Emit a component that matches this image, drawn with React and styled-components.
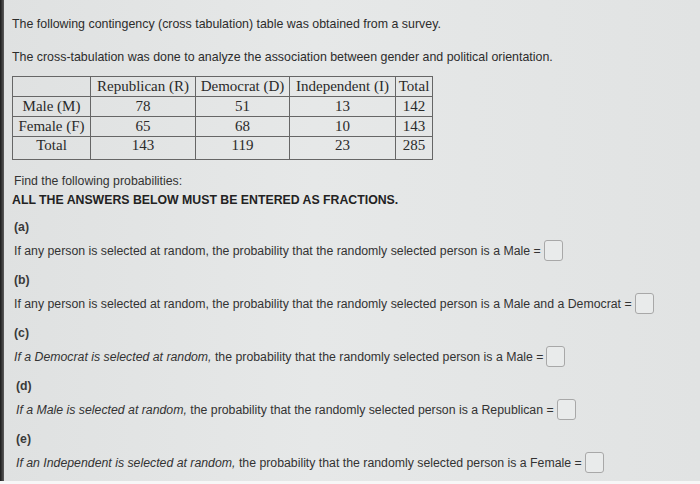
import React from 'react';
import styled, { createGlobalStyle } from 'styled-components';

const Global = createGlobalStyle`
	html, body {
		margin: 0;
		padding: 0;
		background: #e3e5e5;
	}
	body {
		font-family: "Liberation Sans", Arial, sans-serif;
		color: #333;
	}
`

const Screen = styled.div`
	display: flex;
	width: 700px;
	height: 484px;
	overflow: hidden;
	background: linear-gradient(90deg, #dfe1e1 0%, #e6e8e8 45%, #e1e3e3 100%);
	border-bottom: 3px solid #f7f7f7;
	box-sizing: border-box;
`

const Bezel = styled.div`
	width: 4px;
	flex-shrink: 0;
	background: linear-gradient(90deg, #1a1a1a, #5c5c5c);
`

const Content = styled.div`
	flex: 1;
	padding: 17px 0 0 8px;
`

const Intro = styled.p`
	margin: 0 0 ${props => props.gap || '0'};
	font-size: 12.4px;
	line-height: 15px;
	color: #2c2c2c;
`

const Table = styled.table`
	border-collapse: collapse;
	margin-top: 11px;
	font-family: "Liberation Serif", "Times New Roman", serif;
	font-size: 15px;
	color: #2a2a2a;
	border: 1.5px solid #555;
`

const Cell = styled.td`
	border: 1px solid #666;
	padding: 0;
	height: ${props => props.h || 19}px;
	width: ${props => props.w}px;
	text-align: center;
	line-height: 17px;
	vertical-align: ${props => props.top ? 'top' : 'middle'};
	white-space: nowrap;
`

const Find = styled.div`
	margin-top: 14px;
	padding-left: 2px;
	font-size: 12.3px;
	line-height: 15px;
`

const Bold = styled.div`
	margin-top: 4px;
	font-size: 12.3px;
	line-height: 15px;
	font-weight: bold;
	color: #222;
`

const Part = styled.div`
	margin-top: 12px;
	padding-left: ${props => props.indent || 2}px;
`

const Label = styled.div`
	font-size: 12.3px;
	line-height: 15px;
	font-weight: bold;
	color: #3a3a3a;
	margin-bottom: 5px;
`

const Question = styled.div`
	display: flex;
	align-items: center;
	font-size: 12.3px;
	color: #333;
	white-space: nowrap;
	& em { font-style: italic; }
`

const AnswerBox = styled.span`
	display: inline-block;
	width: 17px;
	height: 19px;
	margin-left: 3px;
	border: 1px solid #a8a8a8;
	border-radius: 3px;
	background: #e9ebeb;
`

const rows = [
	['Male (M)', 78, 51, 13, 142],
	['Female (F)', 65, 68, 10, 143],
	['Total', 143, 119, 23, 285],
]
const widths = [77, 104, 93, 105, 36]

const questions = [
	{ label: '(a)', lead: 'If any person is selected at random,', rest: 'the probability that the randomly selected person is a Male =' },
	{ label: '(b)', lead: 'If any person is selected at random,', rest: 'the probability that the randomly selected person is a Male and a Democrat =' },
	{ label: '(c)', lead: 'If a Democrat is selected at random,', rest: 'the probability that the randomly selected person is a Male =', italic: true },
	{ label: '(d)', lead: 'If a Male is selected at random,', rest: 'the probability that the randomly selected person is a Republican =', italic: true },
	{ label: '(e)', lead: 'If an Independent is selected at random,', rest: 'the probability that the randomly selected person is a Female =', italic: true },
]

const App = () => {
	return (
		<Screen>
			<Global />
			<Bezel />
			<Content>
				<Intro gap="18px">The following contingency (cross tabulation) table was obtained from a survey.</Intro>
				<Intro>The cross-tabulation was done to analyze the association between gender and political orientation.</Intro>
				<Table>
					<tbody>
						<tr>
							<Cell w={widths[0]}></Cell>
							<Cell w={widths[1]}>Republican (R)</Cell>
							<Cell w={widths[2]}>Democrat (D)</Cell>
							<Cell w={widths[3]}>Independent (I)</Cell>
							<Cell w={widths[4]}>Total</Cell>
						</tr>
						{rows.map((row, i) => (
							<tr key={i}>
								{row.map((v, j) => (
									<Cell key={j} w={widths[j]} h={i === 2 ? 22 : 19} top={i === 2}>{v}</Cell>
								))}
							</tr>
						))}
					</tbody>
				</Table>
				<Find>Find the following probabilities:</Find>
				<Bold>ALL THE ANSWERS BELOW MUST BE ENTERED AS FRACTIONS.</Bold>
				{questions.map((q, i) => (
					<Part key={q.label} indent={i >= 3 ? 4 : 2}>
						<Label>{q.label}</Label>
						<Question>
							{q.italic ? <em>{q.lead}</em> : <span>{q.lead}</span>}
							<span>&nbsp;{q.rest}</span>
							<AnswerBox />
						</Question>
					</Part>
				))}
			</Content>
		</Screen>
	)
}

export default App;
